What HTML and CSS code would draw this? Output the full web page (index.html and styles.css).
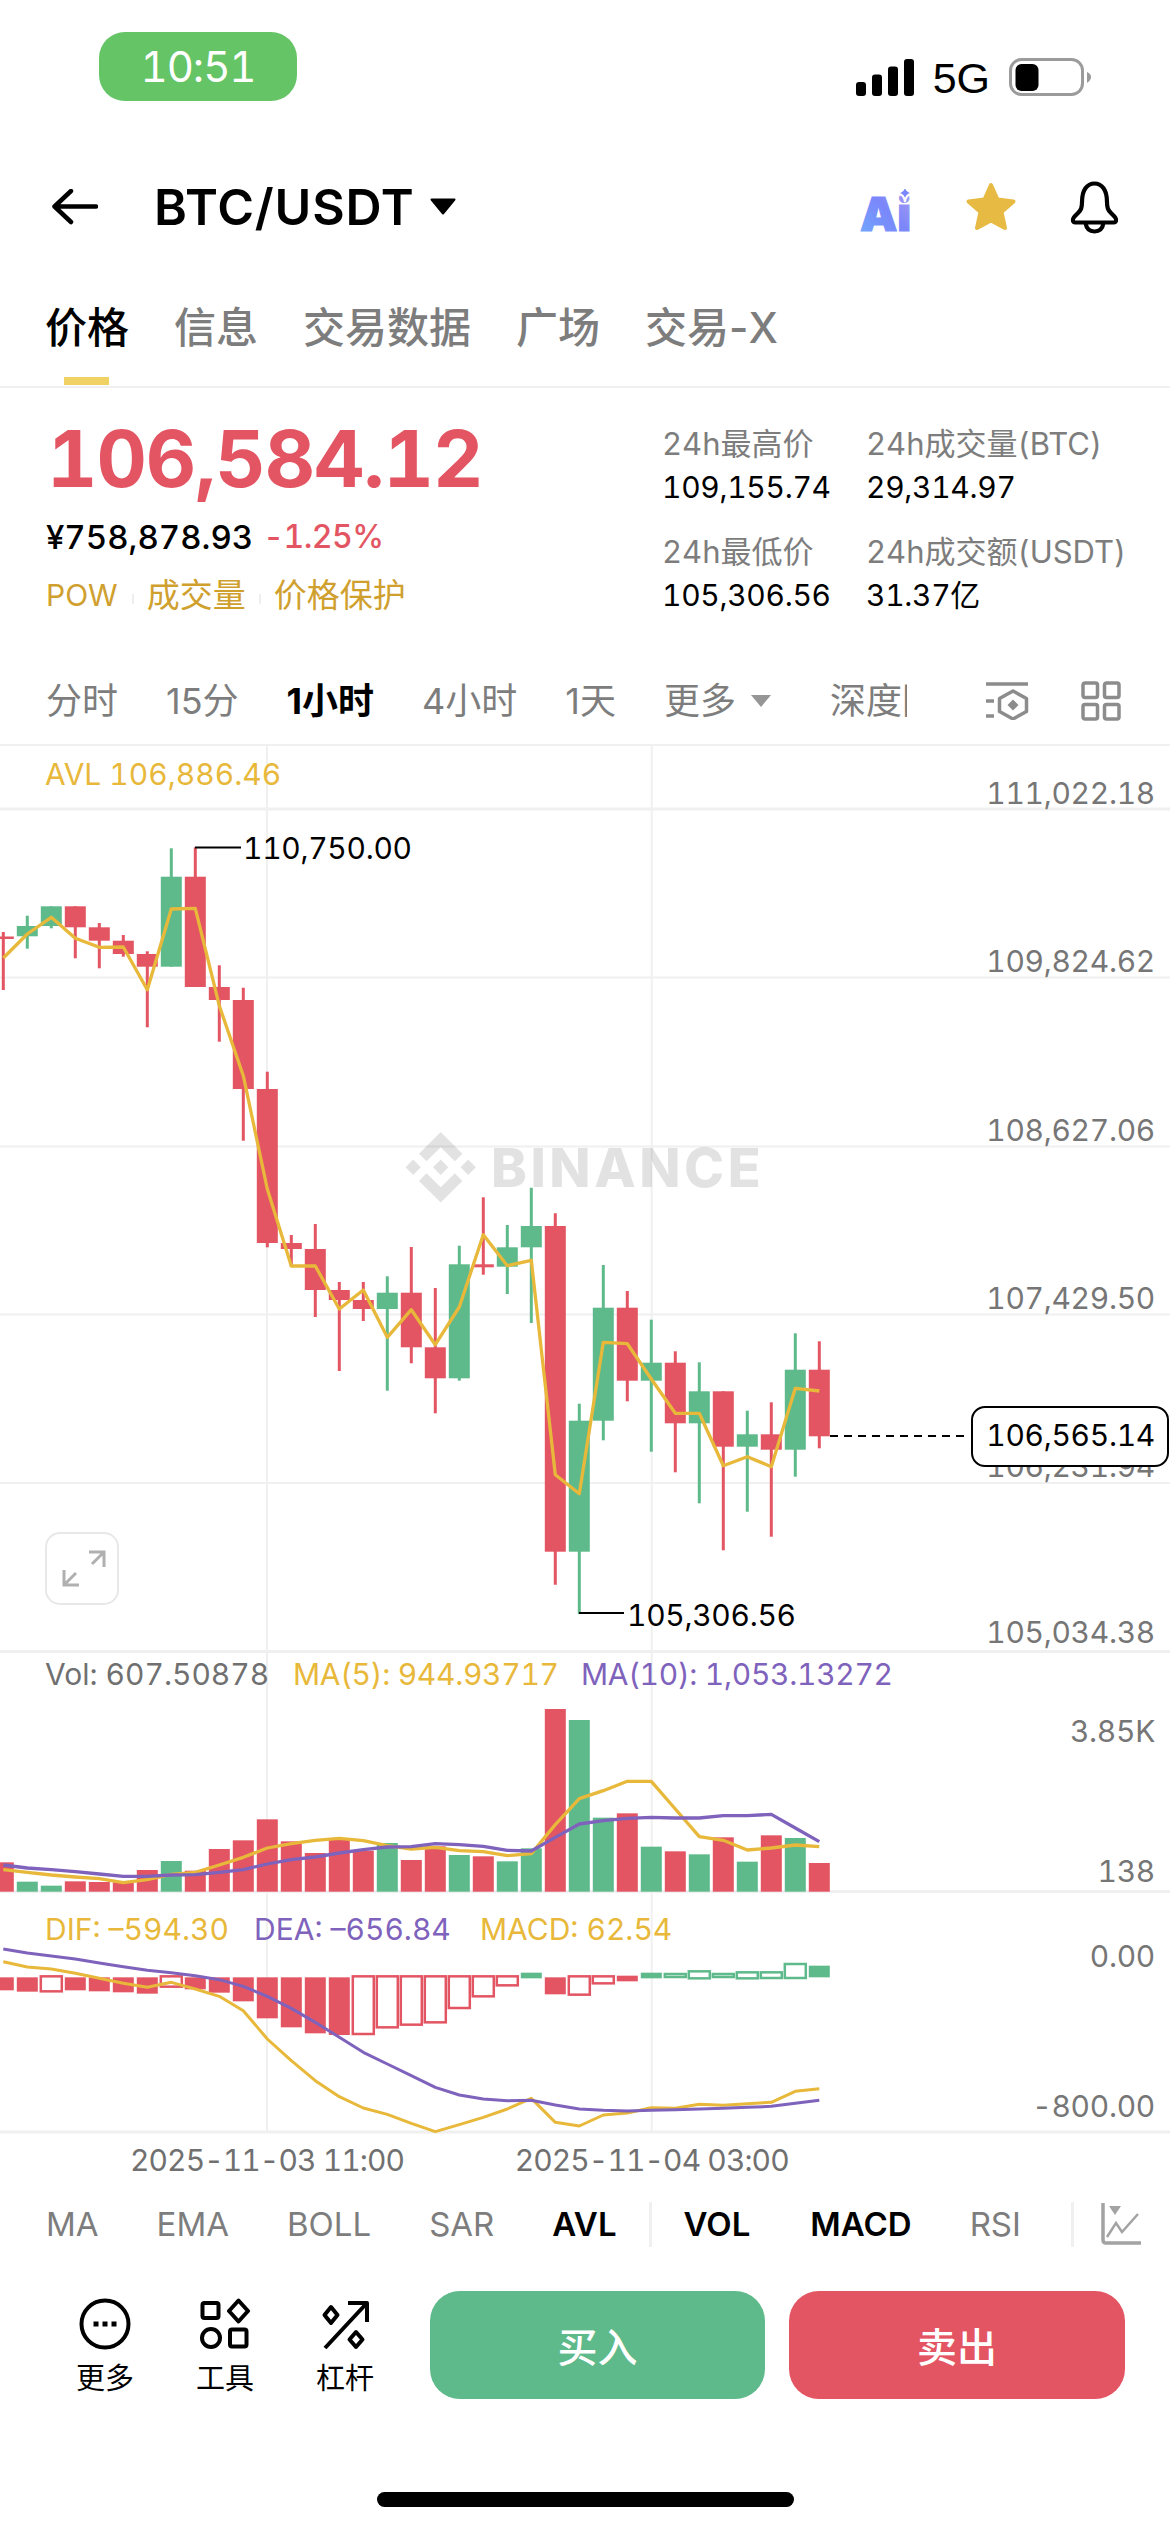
FILE: index.html
```html
<!DOCTYPE html>
<html lang="zh">
<head>
<meta charset="utf-8">
<title>BTC/USDT</title>
<link rel="stylesheet" href="styles.css">
</head>
<body>
<div class="page">
  <div class="status">
    <div class="pill">10:51</div>
    <div class="status-right">
      <svg class="sig" width="58" height="37" viewBox="0 0 58 37"><rect x="0" y="23" width="10" height="14" rx="3"/><rect x="16" y="15.5" width="10" height="21.5" rx="3"/><rect x="32" y="7.5" width="10" height="29.5" rx="3"/><rect x="48" y="0" width="10" height="37" rx="3"/></svg>
      <span class="net">5G</span>
      <svg class="bat" width="83" height="38" viewBox="0 0 83 38"><rect x="1.5" y="1.5" width="72" height="35" rx="11" fill="none" stroke="#9b9b9b" stroke-width="3"/><rect x="6.5" y="6" width="23" height="27" rx="6"/><path d="M78 14 C81 15 82 17 82 19 C82 21 81 23 78 25 Z" fill="#9b9b9b"/></svg>
    </div>
  </div>

  <div class="hdr">
    <svg class="back" width="46" height="36" viewBox="0 0 46 36"><path d="M19 2 L2.5 17.5 L19 33 M2.5 17.5 H44" fill="none" stroke="#000" stroke-width="4.5" stroke-linecap="round" stroke-linejoin="round"/></svg>
    <span class="pair">BTC/USDT</span>
    <svg class="caret" width="26" height="17" viewBox="0 0 26 17"><path d="M1.5 1.5 H24.5 L13 15.5 Z" fill="#000" stroke="#000" stroke-width="2" stroke-linejoin="round"/></svg>
    <div class="hdr-icons">
      <svg class="ai" width="56" height="56" viewBox="0 0 56 56">
        <defs><linearGradient id="aig" x1="0" y1="1" x2="1" y2="0"><stop offset="0" stop-color="#6fabff"/><stop offset=".55" stop-color="#7b86fa"/><stop offset="1" stop-color="#ad9ff0"/></linearGradient></defs>
        <text class="ai-text" x="1" y="53" fill="url(#aig)" stroke="url(#aig)" stroke-width="1.2">Ai</text>
        <path d="M46 6 C47 12 48 13 54 15 C48 17 47 18 46 24 C45 18 44 17 38 15 C44 13 45 12 46 6 Z" fill="#7a86fb" stroke="#fff" stroke-width="2"/>
      </svg>
      <svg width="52" height="50" viewBox="0 0 52 50"><path d="M26 3 L32.5 17.5 L48.5 19.5 L36.5 30 L40 46 L26 38.5 L12 46 L15.5 30 L3.5 19.5 L19.5 17.5 Z" fill="#e7ba43" stroke="#e7ba43" stroke-width="4" stroke-linejoin="round"/></svg>
      <svg width="51" height="53" viewBox="0 0 51 53"><path d="M13 21 C13 9 18 2.5 25.5 2.5 C33 2.5 38 9 38 21 C38 27 39 29 42 32 C45 35 48 37.5 47 40 C46.5 41 46 41.5 45 41.5 L6 41.5 C5 41.5 4.500 41 4 40 C3 37.5 6 35 9 32 C12 29 13 27 13 21 Z M16.500 42 C17.500 48 21 50.500 25.500 50.500 C30 50.500 33.500 48 34.500 42" fill="none" stroke="#000" stroke-width="4.2" stroke-linejoin="round" stroke-linecap="round"/></svg>
    </div>
  </div>

  <div class="tabs">
    <span class="tab on">价格</span>
    <span class="tab">信息</span>
    <span class="tab">交易数据</span>
    <span class="tab">广场</span>
    <span class="tab">交易-X</span>
  </div>

  <div class="summary">
    <div class="sum-left">
      <div class="price">106,584.12</div>
      <div class="sub"><span class="cny">¥758,878.93</span><span class="chg">-1.25%</span></div>
      <div class="tags"><span class="tag-pow">POW</span><i class="tag-sep"></i><span>成交量</span><i class="tag-sep"></i><span>价格保护</span></div>
    </div>
    <div class="stats">
      <div class="stat"><div class="s-k">24h最高价</div><div class="s-v">109,155.74</div></div>
      <div class="stat"><div class="s-k">24h成交量(BTC)</div><div class="s-v">29,314.97</div></div>
      <div class="stat"><div class="s-k">24h最低价</div><div class="s-v">105,306.56</div></div>
      <div class="stat"><div class="s-k">24h成交额(USDT)</div><div class="s-v">31.37亿</div></div>
    </div>
  </div>

  <div class="intervals">
    <span class="iv">分时</span>
    <span class="iv">15分</span>
    <span class="iv on">1小时</span>
    <span class="iv">4小时</span>
    <span class="iv">1天</span>
    <span class="iv iv-more">更多<svg width="22" height="14" viewBox="0 0 22 14"><path d="M1 1 H21 L11 13 Z" fill="#969696"/></svg></span>
    <span class="iv iv-depth">深度图</span>
    <svg class="iv-ic1" width="44" height="38" viewBox="0 0 44 38"><path d="M1 2 H43 M1 19 H9 M1 34 H9" fill="none" stroke="#8c8c8c" stroke-width="3.500"/><path d="M28 9 L41.500 16.500 V29.500 L28 37 L14.500 29.500 V16.500 Z" fill="none" stroke="#8c8c8c" stroke-width="3.500" stroke-linejoin="round"/><path d="M28 17.500 L33.500 23 L28 28.500 L22.500 23 Z" fill="#8c8c8c"/></svg>
    <svg class="iv-ic2" width="40" height="40" viewBox="0 0 40 40"><g fill="none" stroke="#8c8c8c" stroke-width="3.500"><rect x="2" y="2" width="14.500" height="14.500" rx="2"/><rect x="23.500" y="2" width="14.500" height="14.500" rx="2"/><rect x="2" y="23.500" width="14.500" height="14.500" rx="2"/><rect x="23.500" y="23.500" width="14.500" height="14.500" rx="2"/></g></svg>
  </div>

  <div class="chart" id="chart"></div>

  <div class="inds">
    <span class="ind">MA</span>
    <span class="ind">EMA</span>
    <span class="ind">BOLL</span>
    <span class="ind">SAR</span>
    <span class="ind on">AVL</span>
    <i class="ind-sep"></i>
    <span class="ind on ind-wide">VOL</span>
    <span class="ind on">MACD</span>
    <span class="ind">RSI</span>
    <i class="ind-sep ind-sep2"></i>
    <svg width="40" height="42" viewBox="0 0 40 42"><path d="M2 0 V37 C2 39 3 40 5 40 H40" fill="none" stroke="#a3a3a3" stroke-width="3.500"/><path d="M8 3 H20 L14 12 Z" fill="#a3a3a3"/><path d="M6 34 L15 20 L21 29 L37 11" fill="none" stroke="#a3a3a3" stroke-width="2.500"/></svg>
  </div>

  <div class="actions">
    <div class="tools">
      <div class="tool">
        <svg width="52" height="52" viewBox="0 0 52 52"><circle cx="26" cy="26" r="23.500" fill="none" stroke="#000" stroke-width="4"/><rect x="14.500" y="23.500" width="5" height="5"/><rect x="23.500" y="23.500" width="5" height="5"/><rect x="32.500" y="23.500" width="5" height="5"/></svg>
        <span>更多</span>
      </div>
      <div class="tool">
        <svg width="52" height="52" viewBox="0 0 52 52"><g fill="none" stroke="#000" stroke-width="4"><rect x="3.500" y="5" width="16" height="15" rx="2"/><path d="M39.500 2.500 L49 13 L39.500 23.500 L30 13 Z" stroke-linejoin="round"/><circle cx="12" cy="40" r="9"/><rect x="31" y="31.500" width="16.500" height="17" rx="2"/></g></svg>
        <span>工具</span>
      </div>
      <div class="tool">
        <svg width="52" height="52" viewBox="0 0 52 52"><g fill="none" stroke="#000" stroke-width="4" stroke-linejoin="round"><path d="M12 9 L18.500 17 L12 25 L5.500 17 Z"/><path d="M37 34 L43.500 41.500 L37 49 L30.500 41.500 Z"/><path d="M6 50 L47 6 M29 5 H48 V24"/></g></svg>
        <span>杠杆</span>
      </div>
    </div>
    <div class="btn btn-buy">买入</div>
    <div class="btn btn-sell">卖出</div>
  </div>

  <div class="home"></div>
</div>
<script src="script.js"></script>
</body>
</html>
```

FILE: styles.css
```css
* { box-sizing: border-box; font-variant-numeric: tabular-nums !important; }
html, body { margin: 0; padding: 0; background: #fff; }
body { font-family: Inter, "Noto Sans CJK SC", sans-serif; color: #000; }
.page { width: 1170px; height: 2532px; overflow: hidden; }

.status { height: 140px; display: flex; justify-content: space-between; padding: 32px 78px 0 99px; }
.pill { width: 198px; height: 69px; border-radius: 26px; background: #65c466; color: #fff; font: 400 42px/69px Inter, sans-serif; text-align: center; letter-spacing: -1px; }
.status-right { display: flex; align-items: center; height: 38px; margin-top: 26px; }
.sig { margin-top: 1px; }
.net { font: 400 43px/38px "Liberation Sans", sans-serif; margin-left: 19px; margin-top: 2px; }
.bat { margin-left: 19px; }

.hdr { height: 134px; display: flex; align-items: center; padding: 0 50px 0 52px; }
.pair { margin-left: 56px; font: 600 50px/60px Inter, sans-serif; letter-spacing: .8px; }
.caret { margin-left: 15px; margin-top: -2px; }
.hdr-icons { margin-left: auto; display: flex; align-items: center; gap: 52px; }
.ai { margin-top: -2px; margin-right: -2px; overflow: visible; }
.ai-text { font: 900 47px Inter, sans-serif; }

.tabs { height: 114px; display: flex; gap: 45px; padding: 0 0 4px 45px; align-items: center; border-bottom: 2px solid #f0f0f0; }
.tab { position: relative; font: 500 42px/54px Inter, "Noto Sans CJK SC", sans-serif; color: #7d7d7d; font-variant-numeric: normal !important; }
.tab.on { color: #000; }
.tab.on::after { content: ""; position: absolute; left: 19px; top: 76px; width: 45px; height: 8px; background: #f0d264; }

.summary { display: flex; height: 252px; padding: 32px 0 0 46px; }
.sum-left { width: 616px; }
.price { font: 700 78px/78px Inter, sans-serif; color: #e35562; letter-spacing: -1px; margin-left: 1px; }
.sub { margin-top: 19px; font: 500 33px/40px Inter, "Noto Sans CJK SC", sans-serif; display: flex; gap: 10px; }
.chg { color: #e35562; font-size: 32px; letter-spacing: -.5px; }
.tags { margin-top: 18px; display: flex; align-items: center; gap: 13px; font: 400 33px/40px Inter, "Noto Sans CJK SC", sans-serif; color: #d0a02e; }
.tag-pow { font-size: 30px; margin-right: 1px; }
.tag-sep { width: 2px; height: 10px; margin-top: 8px; background: #eee; }
.stats { display: grid; grid-template-columns: 204px 1fr; grid-auto-rows: 108px; margin-top: 4px; }
.s-k { font: 400 31px/40px Inter, "Noto Sans CJK SC", sans-serif; color: #7d7d7d; }
.s-v { margin-top: 3px; font: 400 30px/40px Inter, "Noto Sans CJK SC", sans-serif; letter-spacing: -.3px; }

.intervals { height: 106px; display: flex; align-items: center; padding: 20px 0 2px 46px; border-bottom: 2px solid #f0f0f0; font: 400 36px/46px Inter, "Noto Sans CJK SC", sans-serif; color: #7d7d7d; }
.iv { margin-right: 48px; white-space: nowrap; font-variant-numeric: normal !important; }
.iv.on { color: #000; font-weight: 700; }
.iv-more { display: flex; align-items: center; gap: 14px; margin-right: 58px; }
.iv-depth { width: 77px; overflow: hidden; margin-right: 78px; }
.iv-ic1 { margin-right: 52px; }

.chart { height: 1443px; }
.chart svg { display: block; }
.c-text { font: 400 30px Inter, sans-serif; }
.c-axis { fill: #767676; text-anchor: end; letter-spacing: -.3px; }
.c-end { text-anchor: end; letter-spacing: -.3px; }
.c-mid { text-anchor: middle; letter-spacing: -.9px; }
.c-dark { fill: #000; }
.c-tight { letter-spacing: -.3px; }
.c-gray { fill: #707070; }
.c-yellow { fill: #e8b83a; }
.c-purple { fill: #7e62bc; }
.c-wm { font: 800 54px Inter, sans-serif; fill: #000; fill-opacity: .115; letter-spacing: 3.500px; }

.inds { height: 70px; display: flex; align-items: center; padding-left: 46px; font: 400 33px/40px Inter, sans-serif; color: #7d7d7d; }
.ind { margin-right: 58px; }
.ind.on { color: #000; font-weight: 600; }
.ind.ind-wide { margin-right: 60px; }
.ind-sep { width: 3px; height: 45px; background: #f0f0f0; margin: 0 32px 0 -26px; }
.ind-sep.ind-sep2 { margin: 0 27px 0 -8px; }

.actions { height: 140px; padding: 32px 45px 0; display: flex; }
.tools { display: flex; width: 360px; margin-right: 25px; padding-top: 7px; }
.tool { width: 120px; display: flex; flex-direction: column; align-items: center; font: 400 29px/36px "Noto Sans CJK SC", sans-serif; }
.tool span { margin-top: 8px; }
.btn { height: 108px; width: 335px; border-radius: 30px; color: #fff; font: 500 40px/108px "Noto Sans CJK SC", sans-serif; text-align: center; }
.btn-buy { background: #5fba8b; margin-right: 24px; }
.btn-sell { background: #e35562; width: 336px; }

.home { width: 417px; height: 15px; border-radius: 8px; background: #000; margin: 93px auto 0; }
```

FILE: script.js
```js
const G = '#5fba8b', R = '#e35562', Y = '#e8b83a', P = '#7e62bc', LINE = '#f0f0f0';
const X = i => 3.3 + 24 * i;

// [body top, body bottom, wick top, wick bottom, colour]
const candles = [
  [937.5,940,933,991,R],[927,937.3,916.7,949.7,G],[907.3,927,907.3,929.3,G],[907.3,928.3,907.3,959.3,R],
  [928.3,941.7,924,969.3,R],[941.7,955,936,957.7,R],[955,967.7,952.3,1028.3,R],[877.7,967.7,849.3,967.7,G],
  [877.7,988,848.3,988,R],[988,1001,966.3,1042.700,R],[1001,1090,988.7,1141.7,R],[1090,1244,1072.7,1248.3,R],
  [1244,1250,1236,1268,R],[1250,1291,1225,1318,R],[1291,1301,1283,1372,R],[1301,1310,1283,1322,R],
  [1293.7,1310,1277.3,1391.7,G],[1293.7,1348.3,1248,1364.3,R],[1348.3,1379.3,1289,1414.3,R],[1265.3,1379.3,1246.7,1381.7,G],
  [1265.3,1268.3,1198.3,1275.7,R],[1248.3,1267.7,1226,1295,G],[1227,1248.3,1188.7,1324,G],[1227,1552.7,1214.3,1585.7,R],
  [1421.7,1552.7,1404.7,1615,G],[1308.7,1421.7,1266,1441.3,G],[1308.7,1381.7,1292,1402.3,R],[1363.7,1381.7,1320.7,1452.7,G],
  [1363.7,1424.3,1352.3,1473.3,R],[1392.3,1424.3,1363.3,1504.3,G],[1392.3,1447.7,1392.3,1551.3,R],[1435.3,1447.7,1411.7,1512.7,G],
  [1435.3,1450.7,1403.3,1537.7,R],[1370.7,1450.7,1334.3,1477.7,G],[1370.7,1437.3,1342.3,1449.3,R]
];
const avl = [959,935,918.3,939.3,948.3,948,990.7,910,909.3,1006.7,1076.7,1190,1267,1267,1310,1291,1338.3,1310.7,1345.7,1308,1235.7,1266.7,1261.3,1475.7,1494.7,1343.3,1344.7,1380,1414.3,1414.3,1466.7,1457.7,1467.7,1389.3,1392];

// volume panel (offsets in thirds of a pixel from y = 1640)
const volColors = 'RGGRRRRGRRRRRRRRGRRGRGGRGGRGRGRGRGR';
const volTops = [670,728,740,727,729,730,693,666,695,630,604,541,607,642,598,635,612,663,622,648,652,667,628,210,243,536,523,623,637,646,595,668,589,597,672];
const ma5 = [692,700,708,714,719,731,722,706,700,678,655,627,614,604,598,605,620,630,625,635,638,650,644,557,479,455,427,427,510,593,604,633,627,618,623];
const ma10 = [678,687,692,698,705,712,712,708,707,700,692,675,662,654,642,632,624,623,614,617,622,634,636,595,555,545,538,535,537,537,530,530,526,567,608];

// macd panel (offsets in thirds of a pixel from y = 1880): [top, bottom, colour, hollow]
const macd = [
  [295,334,R,0],[295,338,R,0],[292,337,R,1],[295,334,R,0],[295,337,R,0],[295,340,R,0],[295,344,R,0],[292,323,R,1],
  [295,331,R,0],[295,341,R,0],[295,367,R,0],[295,418,R,0],[295,445,R,0],[295,463,R,0],[295,468,R,0],[292,465,R,1],
  [292,445,R,1],[292,437,R,1],[292,430,R,1],[292,387,R,1],[292,352,R,1],[292,319,R,1],[281,298,G,0],[295,346,R,0],
  [292,347,R,1],[292,313,R,1],[290,307,R,0],[281,298,G,0],[285,294,G,1],[277,298,G,1],[285,294,G,1],[280,298,G,1],
  [280,297,G,1],[255,297,G,1],[260,295,G,0]
];
const dif = [248,264,270,283,298,313,325,310,330,352,395,480,545,605,653,687,706,733,758,737,715,690,658,730,741,708,702,686,688,676,679,674,670,637,629];
const dea = [210,222,231,240,252,263,274,281,290,302,322,352,388,430,475,520,555,590,625,648,660,665,664,678,690,694,696,694,692,690,688,685,682,673,664];

const rect = (x, y, w, h, fill) => `<rect x="${x}" y="${y}" width="${w}" height="${h}" fill="${fill}"/>`;
const vline = (x, y1, y2, c, w) => `<line x1="${x}" x2="${x}" y1="${y1}" y2="${y2}" stroke="${c}" stroke-width="${w}"/>`;
const hline = (x1, x2, y, c, w) => `<line x1="${x1}" x2="${x2}" y1="${y}" y2="${y}" stroke="${c}" stroke-width="${w}"/>`;
const poly = (ys, f, c, w) => `<polyline points="${ys.map((v, i) => X(i) + ',' + f(v)).join(' ')}" fill="none" stroke="${c}" stroke-width="${w}" stroke-linejoin="round"/>`;
const text = (x, y, s, cls) => `<text class="c-text ${cls}" x="${x}" y="${y}">${s}</text>`;

let s = '';
// grid
[267, 651.7].forEach(x => { s += vline(x, 747, 2133, LINE, 2); });
[978.5, 1147.5, 1315.5, 1484].forEach(y => { s += hline(0, 1170, y, LINE, 2); });
[810, 1652.5, 1892.5, 2133].forEach(y => { s += hline(0, 1170, y, LINE, 3); });

// watermark
const cx = 440.7, cy = 1168.3;
const pts = a => a.map(p => (cx + p[0]) + ',' + (cy + p[1])).join(' ');
[[0,0],[-27.5,0],[27.5,0]].forEach(o => {
  s += `<polygon points="${pts([[o[0],-7.7],[o[0]+7.7,0],[o[0],7.7],[o[0]-7.7,0]])}" fill="#000" fill-opacity=".115"/>`;
});
[-1, 1].forEach(d => {
  s += `<polygon points="${pts([[0,d*35.3],[21.7,d*13.6],[14.2,d*6],[0,d*20],[-14.2,d*6],[-21.7,d*13.6]])}" fill="#000" fill-opacity=".115"/>`;
});
s += `<text class="c-wm" x="491" y="1188">BINANCE</text>`;

// candles
candles.forEach((c, i) => {
  s += vline(X(i), c[2], c[3], c[4], 3);
  s += rect(X(i) - 10.5, c[0], 21, c[1] - c[0], c[4]);
});
s += poly(avl, v => v, Y, 3.3);

// extreme markers
s += hline(195, 241, 848.5, '#000', 2);
s += text(243, 860, '110,750.00', 'c-dark c-tight');
s += hline(579, 624, 1614, '#000', 2);
s += text(627, 1627, '105,306.56', 'c-dark c-tight');

// axis
[['111,022.18',805],['109,824.62',973],['108,627.06',1142],['107,429.50',1310],['106,231.94',1478],['105,034.38',1644],['3.85K',1743],['138',1883],['0.00',1968],['-800.00',2118]].forEach(a => {
  s += text(1155, a[1], a[0], 'c-axis');
});

// current price
s += `<line x1="830" x2="968" y1="1437" y2="1437" stroke="#000" stroke-width="2" stroke-dasharray="8 6"/>`;
s += `<rect x="972" y="1408" width="196" height="59" rx="13" fill="#fff" stroke="#000" stroke-width="2"/>`;
s += text(1155, 1447, '106,565.14', 'c-dark c-end');

// expand button
s += `<rect x="46" y="1534" width="72" height="71" rx="14" fill="#fff" stroke="#e8e8e8" stroke-width="2"/>`;
s += `<path d="M64 1571 V1586 H79 M64 1586 L76 1574 M104 1568 V1553 H89 M104 1553 L92 1565" fill="none" stroke="#b0b0b0" stroke-width="3"/>`;

// labels
s += text(45, 786, 'AVL 106,886.46', 'c-yellow');
s += text(45, 1686, 'Vol: 607.50878', 'c-gray');
s += text(293, 1686, 'MA(5): 944.93717', 'c-yellow c-tight');
s += text(581, 1686, 'MA(10): 1,053.13272', 'c-purple c-tight');
s += text(45, 1941, 'DIF: –594.30', 'c-yellow');
s += text(254, 1941, 'DEA: –656.84', 'c-purple');
s += text(480, 1941, 'MACD: 62.54', 'c-yellow');

// volume
const vy = v => 1640 + v / 3;
volTops.forEach((t, i) => { s += rect(X(i) - 10.5, vy(t), 21, 1892.7 - vy(t), volColors[i] === 'G' ? G : R); });
s += poly(ma5, vy, Y, 3.3);
s += poly(ma10, vy, P, 3.3);

// macd
const my = v => 1880 + v / 3;
macd.forEach((m, i) => {
  const t = my(m[0]), b = my(m[1]);
  if (m[3]) s += `<rect x="${X(i) - 10.5}" y="${t}" width="21" height="${b - t}" fill="none" stroke="${m[2]}" stroke-width="2.500"/>`;
  else s += rect(X(i) - 10.5, t, 21, b - t, m[2]);
});
s += poly(dif, my, Y, 3);
s += poly(dea, my, P, 3);

// time axis
s += text(267, 2172, '2025-11-03 11:00', 'c-gray c-mid');
s += text(651.7, 2172, '2025-11-04 03:00', 'c-gray c-mid');

document.getElementById('chart').innerHTML =
  `<svg width="1170" height="1443" viewBox="0 747 1170 1443" xmlns="http://www.w3.org/2000/svg">${s}</svg>`;
```
